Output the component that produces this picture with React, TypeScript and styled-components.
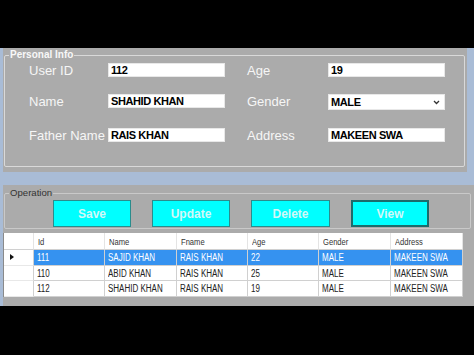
import React from "react";
import styled, { createGlobalStyle } from "styled-components";

const Global = createGlobalStyle`
  html, body { margin: 0; padding: 0; background: #000; }
  body { width: 474px; height: 355px; overflow: hidden; font-family: "Liberation Sans", Arial, sans-serif; }
  * { box-sizing: border-box; }
`;

const Screen = styled.div`
  width: 474px;
  height: 355px;
  background: #000;
  padding-top: 48px;
`;

const Window = styled.div`
  height: 258px;
  background: #a9bcd6;
  padding-left: 3px;
  display: flex;
  flex-direction: column;
`;

const TopPanel = styled.div`
  width: 464px;
  height: 124px;
  background: #ababab;
  padding: 2px 2px 2px 1px;
`;

const Group = styled.fieldset<{ $h: number }>`
  margin: 0;
  padding: 0;
  height: ${(p) => p.$h}px;
  border: 1px solid #d9d9d9;
  border-radius: 2px;
  min-width: 0;
`;

const Legend = styled.legend<{ $light?: boolean }>`
  margin-left: 4px;
  padding: 0 1px;
  font-size: ${(p) => (p.$light ? "10px" : "9.6px")};
  font-weight: ${(p) => (p.$light ? 700 : 400)};
  color: ${(p) => (p.$light ? "#f8f8f8" : "#333")};
  line-height: 10px;
`;

const FormGrid = styled.div`
  display: grid;
  grid-template-columns: 79px 117px 22px 81px 117px;
  padding: 3px 0 0 24px;
`;

const FormRow = styled.div<{ $top: number }>`
  display: contents;
  & > * { margin-top: ${(p) => p.$top}px; }
`;

const Label = styled.div`
  font-size: 13px;
  color: #f6f6f6;
  line-height: 16px;
  white-space: nowrap;
`;

const Spacer = styled.div``;

const TextBox = styled.div<{ $h?: number }>`
  height: ${(p) => p.$h ?? 14}px;
  background: #fff;
  border: 1px solid #e8e8e8;
  font-size: 11px;
  font-weight: 700;
  letter-spacing: -0.4px;
  color: #000;
  line-height: 12px;
  padding-left: 2px;
  display: flex;
  align-items: center;
  justify-content: space-between;
  white-space: nowrap;
`;

const Chevron = styled.svg`
  margin-right: 4px;
`;

const Gap = styled.div`
  height: 13px;
  flex: none;
`;

const BottomPanel = styled.div`
  flex: 1;
  background: #ababab;
  padding: 3px 0 0 0;
  display: flex;
  flex-direction: column;
`;

const OpGroup = styled(Group)`
  width: 467px;
  margin-left: 1px;
  border-color: #c9c9c9;
`;

const ButtonRow = styled.div`
  display: flex;
  padding: 2px 0 0 48px;
  gap: 21px;
`;

const Button = styled.div<{ $focus?: boolean; $w?: number }>`
  width: ${(p) => p.$w ?? 78}px;
  height: 27px;
  background: #00ffff;
  border: ${(p) => (p.$focus ? "2px solid #1c6b6b" : "1px solid #2a8c8c")};
  color: #d2f8f8;
  font-size: 12px;
  font-weight: 700;
  display: flex;
  align-items: center;
  justify-content: center;
`;

const Grid = styled.div`
  margin-top: 4px;
  width: 459px;
  display: grid;
  grid-template-columns: 30px 71px 72px 71px 71px 72px 72px;
  background: #fff;
  border-left: 1px solid #8a8a8a;
`;

const HeadCell = styled.div`
  height: 17px;
  font-size: 9.5px;
  color: #333;
  line-height: 17px;
  padding-left: 4px;
  border-right: 1px solid #e4e4e4;
  border-bottom: 1px solid #d0d0d0;
  background: #fff;
  white-space: nowrap;
  overflow: hidden;
`;

const RowHead = styled.div`
  height: 15.5px;
  background: #fff;
  border-right: 1px solid #d0d0d0;
  border-bottom: 1px solid #e8e8e8;
  display: flex;
  align-items: center;
  padding-left: 6px;
`;

const Cell = styled.div<{ $sel?: boolean }>`
  height: 15.5px;
  font-size: 10px;
  line-height: 15px;
  padding-left: 3px;
  color: ${(p) => (p.$sel ? "#fff" : "#222")};
  background: ${(p) => (p.$sel ? "#3592f0" : "#fff")};
  border-right: 1px solid #d0d0d0;
  border-bottom: 1px solid #d0d0d0;
  white-space: nowrap;
  overflow: hidden;
`;

const Narrow = styled.span`
  display: inline-block;
  transform: scaleX(0.8);
  transform-origin: left center;
`;

const rows = [
  ["111", "SAJID KHAN", "RAIS KHAN", "22", "MALE", "MAKEEN SWA"],
  ["110", "ABID KHAN", "RAIS KHAN", "25", "MALE", "MAKEEN SWA"],
  ["112", "SHAHID KHAN", "RAIS KHAN", "19", "MALE", "MAKEEN SWA"],
];

const heads = ["Id", "Name", "Fname", "Age", "Gender", "Address"];

export default function App() {
  return (
    <>
      <Global />
      <Screen>
        <Window>
          <TopPanel>
            <Group $h={117}>
              <Legend $light>Personal Info</Legend>
              <FormGrid>
                <FormRow $top={0}>
                  <Label>User ID</Label>
                  <TextBox>112</TextBox>
                  <Spacer />
                  <Label>Age</Label>
                  <TextBox>19</TextBox>
                </FormRow>
                <FormRow $top={15}>
                  <Label>Name</Label>
                  <TextBox>SHAHID KHAN</TextBox>
                  <Spacer />
                  <Label>Gender</Label>
                  <TextBox $h={16}>
                    MALE
                    <Chevron width="7" height="5" viewBox="0 0 7 5">
                      <path d="M1 1 L3.5 3.5 L6 1" fill="none" stroke="#333" strokeWidth="1.3" />
                    </Chevron>
                  </TextBox>
                </FormRow>
                <FormRow $top={18}>
                  <Label>Father Name</Label>
                  <TextBox>RAIS KHAN</TextBox>
                  <Spacer />
                  <Label>Address</Label>
                  <TextBox>MAKEEN SWA</TextBox>
                </FormRow>
              </FormGrid>
            </Group>
          </TopPanel>
          <Gap />
          <BottomPanel>
            <OpGroup $h={41}>
              <Legend>Operation</Legend>
              <ButtonRow>
                <Button>Save</Button>
                <Button>Update</Button>
                <Button $w={79}>Delete</Button>
                <Button $focus>View</Button>
              </ButtonRow>
            </OpGroup>
            <Grid>
              <HeadCell />
              {heads.map((h) => (
                <HeadCell key={h}>
                  <Narrow>{h}</Narrow>
                </HeadCell>
              ))}
              {rows.map((r, i) => (
                <React.Fragment key={i}>
                  <RowHead>
                    {i === 0 && (
                      <svg width="4" height="6" viewBox="0 0 4 6">
                        <path d="M0 0 L4 3 L0 6 Z" fill="#111" />
                      </svg>
                    )}
                  </RowHead>
                  {r.map((c, j) => (
                    <Cell key={j} $sel={i === 0}>
                      <Narrow>{c}</Narrow>
                    </Cell>
                  ))}
                </React.Fragment>
              ))}
            </Grid>
          </BottomPanel>
        </Window>
      </Screen>
    </>
  );
}
